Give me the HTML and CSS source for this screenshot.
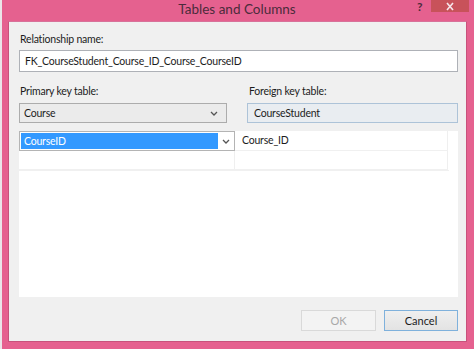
FILE: index.html
```html
<!DOCTYPE html>
<html lang="en">
<head>
    <meta charset="UTF-8">
    <title>Tables and Columns</title>
    <link rel="stylesheet" href="styles.css">
</head>
<body>
    <div class="window">
        <!-- barra de título -->
        <div class="titlebar">
            <span class="title">Tables and Columns</span>
            <span class="help">?</span>
            <span class="close">
                <svg width="10" height="9" viewBox="0 0 10 9"><path d="M2 1 L8 8 M8 1 L2 8" stroke="#f6e6ea" stroke-width="1.6" fill="none"/></svg>
            </span>
        </div>

        <div class="content">
            <label class="label">Relationship name:</label>
            <div class="textbox">FK_CourseStudent_Course_ID_Course_CourseID</div>

            <div class="tables">
                <div class="col">
                    <label class="label">Primary key table:</label>
                    <div class="combo">
                        <span>Course</span>
                        <svg class="chev" width="8" height="5" viewBox="0 0 8 5"><path d="M1 1 L4 4 L7 1" stroke="#555" stroke-width="1.3" fill="none"/></svg>
                    </div>
                </div>
                <div class="col col-right">
                    <label class="label label-right">Foreign key table:</label>
                    <div class="readonly">CourseStudent</div>
                </div>
            </div>

            <!-- grade de colunas -->
            <div class="panel">
                <div class="grid">
                    <div class="cell cell-edit">
                        <span class="selected">CourseID</span>
                        <svg class="chev" width="8" height="5" viewBox="0 0 8 5"><path d="M1 1 L4 4 L7 1" stroke="#555" stroke-width="1.3" fill="none"/></svg>
                    </div>
                    <div class="cell">Course_ID</div>
                    <div class="cell"></div>
                    <div class="cell"></div>
                </div>
            </div>

            <div class="buttons">
                <button class="btn" disabled>OK</button>
                <button class="btn btn-default">Cancel</button>
            </div>
        </div>
    </div>
</body>
</html>
```

FILE: styles.css
```css
* {
    margin: 0;
    padding: 0;
    box-sizing: border-box;
    font-family: Lato, "Noto Sans", sans-serif;
}
body {
    background: #e5618f;
    width: 474px;
    height: 349px;
    overflow: hidden;
}
.window {
    width: 474px;
    height: 349px;
    display: flex;
    flex-direction: column;
    background: #e5618f;
    border-left: 2px solid #ebe6e9;
}
.titlebar {
    height: 21px;
    position: relative;
    display: flex;
    justify-content: center;
    align-items: center;
}
.title {
    font-size: 13.5px;
    color: #4b2b3b;
    margin-top: -3px;
    margin-left: -2px;
}
.help {
    position: absolute;
    left: 415px;
    top: -1px;
    font-size: 12px;
    font-weight: bold;
    color: #4b2b3b;
}
.close {
    position: absolute;
    left: 429px;
    top: 0;
    width: 38px;
    height: 12px;
    background: #c8525a;
    display: flex;
    justify-content: center;
    align-items: center;
}
.content {
    margin: 0 7px 7px 6px;
    flex: 1;
    background: #f0f0f0;
    border: 1px solid #c8527c;
    border-top-color: #d8729a;
    padding: 9px 8px 0 10px;
    display: flex;
    flex-direction: column;
    font-size: 10.5px;
    letter-spacing: -0.2px;
    color: #1c1c1c;
}
.label {
    display: block;
    height: 16px;
    line-height: 16px;
    padding-left: 1px;
}
.textbox {
    margin-top: 3px;
    height: 22px;
    background: #fff;
    border: 1px solid #aeb1b7;
    line-height: 20px;
    padding-left: 5px;
}
.tables {
    display: flex;
    gap: 20px;
    margin-top: 11px;
}
.col {
    width: 208px;
    display: flex;
    flex-direction: column;
}
.col-right {
    width: 211px;
}
.label-right {
    padding-left: 2px;
}
.combo {
    margin-top: 4px;
    height: 20px;
    border: 1px solid #acacac;
    background: #ebebeb;
    display: flex;
    align-items: center;
    justify-content: space-between;
    padding: 0 8px 0 4px;
}
.readonly {
    margin-top: 4px;
    height: 20px;
    border: 1px solid #adc3d8;
    background: #e9edf1;
    line-height: 18px;
    padding-left: 6px;
}
.panel {
    margin-top: 8px;
    height: 166px;
    background: #fff;
    padding-right: 9px;
}
.grid {
    display: grid;
    grid-template-columns: 216px 213px;
    grid-template-rows: 20px 19px;
    border-bottom: 1px solid #f0f0f0;
}
.cell {
    border-right: 1px solid #efefef;
    border-bottom: 1px solid #f0f0f0;
    line-height: 19px;
    padding-left: 7px;
}
.cell-edit {
    border: 1px solid #b4b4b4;
    padding: 1px 4px 1px 1px;
    display: flex;
    align-items: center;
    justify-content: space-between;
}
.selected {
    background: #3399ff;
    color: #fff;
    width: 197px;
    height: 16px;
    line-height: 16px;
    padding-left: 3px;
}
.buttons {
    display: flex;
    justify-content: flex-end;
    gap: 8px;
    margin-top: 13px;
}
.btn {
    width: 75px;
    height: 21px;
    font-size: 11px;
    border: 1px solid #d9d9d9;
    background: #f3f3f3;
    color: #a8a8a8;
}
.btn-default {
    width: 74px;
    border: 1px solid #7fb1dc;
    background: linear-gradient(#efefef, #e3e3e3);
    color: #1c1c1c;
}
```
